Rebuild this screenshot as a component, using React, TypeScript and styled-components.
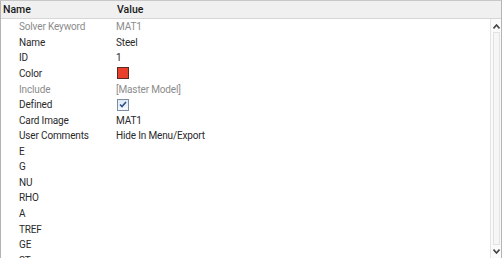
import React from 'react';
import styled, { createGlobalStyle } from 'styled-components';

interface PropRow {
  name: string;
  value?: string;
  kind?: 'text' | 'color' | 'check';
  dim?: boolean;
}

const rows: PropRow[] = [
  { name: 'Solver Keyword', value: 'MAT1', dim: true },
  { name: 'Name', value: 'Steel' },
  { name: 'ID', value: '1' },
  { name: 'Color', kind: 'color' },
  { name: 'Include', value: '[Master Model]', dim: true },
  { name: 'Defined', kind: 'check' },
  { name: 'Card Image', value: 'MAT1' },
  { name: 'User Comments', value: 'Hide In Menu/Export' },
  { name: 'E' },
  { name: 'G' },
  { name: 'NU' },
  { name: 'RHO' },
  { name: 'A' },
  { name: 'TREF' },
  { name: 'GE' },
  { name: 'ST' },
];

const GlobalStyle = createGlobalStyle`
  html, body {
    margin: 0;
    padding: 0;
    background: #ffffff;
    overflow: hidden;
  }
  body {
    font-family: Roboto, "Noto Sans", "Liberation Sans", sans-serif;
  }
`;

const Panel = styled.div`
  width: 502px;
  height: 258px;
  border-top: 1px solid #c8c8c8;
  border-left: 1px solid #b4b4b4;
  border-right: 1px solid #b4b4b4;
  box-sizing: border-box;
  display: flex;
  flex-direction: column;
  overflow: hidden;
`;

const Header = styled.div`
  height: 17px;
  flex-shrink: 0;
  background: #f0f0f0;
  border-bottom: 1px solid #d6d6d6;
  display: grid;
  grid-template-columns: 114px 1fr;
  align-items: center;
  font-size: 10.5px;
  font-weight: 500;
  color: #1a1a1a;
`;

const HeadCell = styled.div<{ $pad: number }>`
  padding-left: ${(p) => p.$pad}px;
  line-height: 17px;
`;

const Body = styled.div`
  flex: 1;
  display: flex;
  min-height: 0;
`;

const List = styled.div`
  flex: 1;
`;

const Row = styled.div`
  height: 15.57px;
  display: grid;
  grid-template-columns: 115px 1fr;
  align-items: center;
  font-size: 10px;
  letter-spacing: -0.15px;
`;

const Cell = styled.div<{ $dim?: boolean; $pad?: number }>`
  padding-left: ${(p) => p.$pad ?? 0}px;
  color: ${(p) => (p.$dim ? '#8c8c8c' : '#2a2a2a')};
  white-space: nowrap;
  display: flex;
  align-items: center;
`;

const Swatch = styled.span`
  width: 12px;
  height: 12px;
  margin-left: 1px;
  background: #e8402a;
  border: 1px solid #5a2a20;
  box-sizing: border-box;
`;

const Check = styled.span`
  width: 12px;
  height: 12px;
  margin-left: 1px;
  box-sizing: border-box;
  border: 1px solid #7b8da3;
  background: linear-gradient(#dfe9f5, #f4f8fc);
  display: flex;
  align-items: center;
  justify-content: center;
`;

const Scrollbar = styled.div`
  width: 10px;
  flex-shrink: 0;
  display: flex;
  flex-direction: column;
  align-items: center;
  padding: 2px 0 2px;
  border-left: 1px solid #e4e4e4;
  background: #fafafa;
`;

const Arrow = styled.div`
  height: 10px;
  display: flex;
  align-items: center;
  justify-content: center;
`;

const Track = styled.div`
  flex: 1;
  width: 7px;
  margin: 1px 0;
  border: 1px solid #e2e2e2;
  background: #f6f6f6;
  box-sizing: border-box;
`;

function Chevron({ up }: { up?: boolean }) {
  return (
    <svg width="7" height="5" viewBox="0 0 7 5">
      <path
        d={up ? 'M0.5 4.5 L3.5 1 L6.5 4.5' : 'M0.5 0.5 L3.5 4 L6.5 0.5'}
        fill="none"
        stroke="#444"
        strokeWidth="1.6"
      />
    </svg>
  );
}

export default function App() {
  return (
    <>
      <GlobalStyle />
      <Panel>
        <Header>
          <HeadCell $pad={2}>Name</HeadCell>
          <HeadCell $pad={2}>Value</HeadCell>
        </Header>
        <Body>
          <List>
            {rows.map((r) => (
              <Row key={r.name}>
                <Cell $pad={18} $dim={r.dim}>{r.name}</Cell>
                <Cell $dim={r.dim}>
                  {r.kind === 'color' && <Swatch />}
                  {r.kind === 'check' && (
                    <Check>
                      <svg width="8" height="7" viewBox="0 0 8 7">
                        <path d="M1 3.5 L3 5.5 L7 1" fill="none" stroke="#2d4f8a" strokeWidth="1.6" />
                      </svg>
                    </Check>
                  )}
                  {r.value}
                </Cell>
              </Row>
            ))}
          </List>
          <Scrollbar>
            <Arrow>
              <Chevron up />
            </Arrow>
            <Track />
            <Arrow>
              <Chevron />
            </Arrow>
          </Scrollbar>
        </Body>
      </Panel>
    </>
  );
}
